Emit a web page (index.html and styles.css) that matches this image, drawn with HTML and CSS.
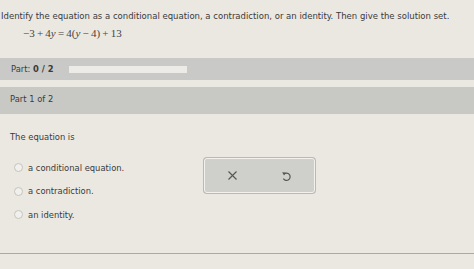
FILE: index.html
```html
<!DOCTYPE html>
<html lang="en">
<head>
    <meta charset="UTF-8">
    <title>Equation Type</title>
    <link rel="stylesheet" href="styles.css">
</head>
<body>
    <div class="prompt">
        <p class="instructions">Identify the equation as a conditional equation, a contradiction, or an identity. Then give the solution set.</p>
        <p class="equation">&minus;3&thinsp;+&thinsp;4<i>y</i>&thinsp;=&thinsp;4(<i>y</i>&thinsp;&minus;&thinsp;4)&thinsp;+&thinsp;13</p>
    </div>

    <div class="part-bar">
        <span>Part: <b>0 / 2</b></span>
        <div class="progress"></div>
    </div>

    <div class="part-title">Part 1 of 2</div>

    <div class="question">
        <p class="lead">The equation is</p>
        <div class="answer-row">
            <ul class="options">
                <li><span class="radio"></span>a conditional equation.</li>
                <li><span class="radio"></span>a contradiction.</li>
                <li><span class="radio"></span>an identity.</li>
            </ul>
            <div class="tools">
                <button class="tool" aria-label="Clear">
                    <svg width="11" height="11" viewBox="0 0 11 11"><path d="M1.5 1.5 L9.5 9.5 M9.5 1.5 L1.5 9.5" stroke="#555" stroke-width="1.1" fill="none"/></svg>
                </button>
                <button class="tool" aria-label="Undo">
                    <svg width="11" height="12" viewBox="0 0 11 12"><path d="M3 4.2 A3.6 3.6 0 1 1 2.4 8.6" stroke="#555" stroke-width="1.2" fill="none"/><path d="M1.2 2.2 L4.6 2.6 L3 5.6 Z" fill="#555"/></svg>
                </button>
            </div>
        </div>
    </div>

    <div class="footer-line"></div>
</body>
</html>
```

FILE: styles.css
```css
body {
    margin: 0;
    background-color: #ebe8e2;
    color: #3a3a3a;
    font-family: "DejaVu Sans", Verdana, sans-serif;
    font-size: 8.4px;
}

p {
    margin: 0;
}

.prompt {
    padding: 11px 0 0 1px;
    height: 47px;
}

.instructions {
    font-size: 8.5px;
}

.equation {
    margin: 6px 0 0 22px;
    font-family: "Liberation Serif", "Times New Roman", serif;
    font-size: 11px;
    color: #444;
}

.part-bar {
    display: flex;
    align-items: center;
    gap: 15px;
    height: 22px;
    padding-left: 11px;
    background-color: #c9cac7;
}

.progress {
    width: 118px;
    height: 7px;
    background-color: #ecebe8;
}

.part-title {
    margin-top: 7px;
    height: 27px;
    line-height: 25px;
    padding-left: 10px;
    background-color: #c8c9c4;
}

.question {
    padding: 18px 0 0 10px;
    height: 121px;
}

.lead {
    margin-bottom: 13px;
}

.answer-row {
    display: flex;
    align-items: flex-start;
}

.options {
    list-style: none;
    margin: 0;
    padding: 0;
    width: 194px;
}

.options li {
    display: flex;
    align-items: center;
    gap: 5px;
    height: 23.5px;
    padding-left: 4px;
}

.options li:first-child {
    margin-top: 1px;
}

.radio {
    width: 7px;
    height: 7px;
    border: 1px solid #c4c4c0;
    border-radius: 50%;
    background-color: #f1f0ec;
}

.tools {
    display: flex;
    justify-content: space-around;
    align-items: center;
    width: 109px;
    height: 33px;
    margin-top: 3px;
    background-color: #cfd0cc;
    border: 1px solid #f2f1ee;
    border-radius: 3px;
    box-shadow: 0 0 0 1px #b9bab6;
}

.tool {
    border: none;
    background: none;
    padding: 0;
    width: 20px;
    display: flex;
    justify-content: center;
}

.footer-line {
    height: 1px;
    background-color: #a9a8a4;
}
```
